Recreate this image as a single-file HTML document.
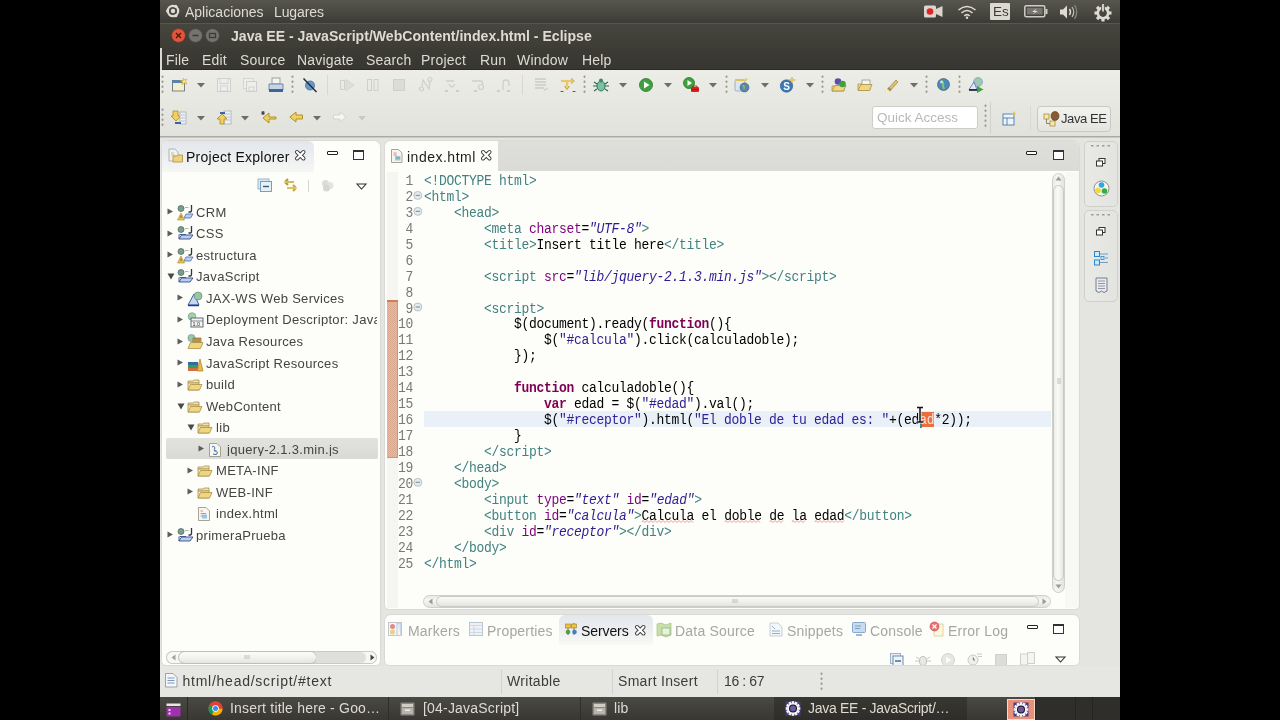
<!DOCTYPE html>
<html><head><meta charset="utf-8"><style>
*{margin:0;padding:0;box-sizing:border-box}
html,body{width:1280px;height:720px;background:#000;overflow:hidden;font-family:"Liberation Sans",sans-serif}
.a{position:absolute}
.t{position:absolute;white-space:pre;line-height:1}
svg{position:absolute;overflow:visible}
#screen{position:absolute;left:160px;top:0;width:960px;height:720px;background:#e6e6e3;overflow:hidden;will-change:transform}
.code{font-family:"Liberation Mono",monospace;font-size:13px;letter-spacing:-0.3px;color:#000}
.cl{position:absolute;left:0;height:16px;line-height:16px;white-space:pre;transform:scaleY(1.12);transform-origin:50% 60%}
.lnn{position:absolute;right:0;height:16px;line-height:16px;color:#787878;text-align:right;transform:scaleY(1.12);transform-origin:50% 60%}
.tg{color:#428282}
.at{color:#7f007f}
.av{color:#2c1c94;font-style:italic}
.kw{color:#7f0055;font-weight:bold}
.st{color:#2e2299}
.sel{color:#fbe0d4}
.sp{}
.tree{font-size:13px;letter-spacing:0.3px;color:#444}
</style></head><body><div id="screen">
<div class="a" style="left:0px;top:0px;width:960px;height:23px;background:linear-gradient(#57564e,#3c3b35)"></div>
<div class="a" style="left:0px;top:23px;width:960px;height:1px;background:#57564f"></div>
<svg style="left:6px;top:4px" width="14" height="14" viewBox="0 0 14 14"><circle cx="7" cy="7" r="5.2" fill="none" stroke="#dfdbd2" stroke-width="2.2"/><circle cx="7" cy="7" r="2.2" fill="#dfdbd2"/><circle cx="1.6" cy="7" r="1.6" fill="#dfdbd2"/><circle cx="9.8" cy="2.3" r="1.6" fill="#dfdbd2"/><circle cx="9.8" cy="11.7" r="1.6" fill="#dfdbd2"/></svg>
<span class="t" style="left:25px;top:5px;font-size:14px;color:#dfdbd2;letter-spacing:0px">Aplicaciones</span>
<span class="t" style="left:114px;top:5px;font-size:14px;color:#dfdbd2;letter-spacing:-0.1px">Lugares</span>
<div class="a" style="left:0px;top:24px;width:960px;height:24px;background:linear-gradient(#46453e,#3d3c35)"></div>
<svg style="left:11px;top:28px" width="15" height="15" viewBox="0 0 15 15"><circle cx="7.5" cy="7.5" r="6.8" fill="#e2553a" stroke="#8a3526" stroke-width="0.6"/><path d="M5 5 L10 10 M10 5 L5 10" stroke="#4a1a10" stroke-width="1.3"/></svg>
<svg style="left:28px;top:28px" width="15" height="15" viewBox="0 0 15 15"><circle cx="7.5" cy="7.5" r="6.8" fill="#75736e" stroke="#4a4945" stroke-width="0.6"/><path d="M4.5 7.5 H10.5" stroke="#3c3b37" stroke-width="1.5"/></svg>
<svg style="left:45px;top:28px" width="15" height="15" viewBox="0 0 15 15"><circle cx="7.5" cy="7.5" r="6.8" fill="#75736e" stroke="#4a4945" stroke-width="0.6"/><rect x="4.5" y="5.5" width="6" height="4" fill="none" stroke="#3c3b37" stroke-width="1.3"/></svg>
<span class="t" style="left:71px;top:29px;font-size:14.1px;font-weight:bold;color:#dfdbd2">Java EE - JavaScript/WebContent/index.html - Eclipse</span>
<div class="a" style="left:0px;top:48px;width:960px;height:22px;background:linear-gradient(#3c3b34,#373630)"></div>
<div class="a" style="left:0px;top:69px;width:960px;height:1px;background:#2a2a25"></div>
<div class="a" style="left:0px;top:48px;width:1.5px;height:22px;background:#d8d8d4"></div>
<span class="t" style="left:6px;top:53px;font-size:14px;color:#dfdbd2;letter-spacing:0.2px">File</span>
<span class="t" style="left:42px;top:53px;font-size:14px;color:#dfdbd2;letter-spacing:0.2px">Edit</span>
<span class="t" style="left:80px;top:53px;font-size:14px;color:#dfdbd2;letter-spacing:0.2px">Source</span>
<span class="t" style="left:137px;top:53px;font-size:14px;color:#dfdbd2;letter-spacing:0.2px">Navigate</span>
<span class="t" style="left:206px;top:53px;font-size:14px;color:#dfdbd2;letter-spacing:0.2px">Search</span>
<span class="t" style="left:261px;top:53px;font-size:14px;color:#dfdbd2;letter-spacing:0.2px">Project</span>
<span class="t" style="left:320px;top:53px;font-size:14px;color:#dfdbd2;letter-spacing:0.2px">Run</span>
<span class="t" style="left:357px;top:53px;font-size:14px;color:#dfdbd2;letter-spacing:0.2px">Window</span>
<span class="t" style="left:422px;top:53px;font-size:14px;color:#dfdbd2;letter-spacing:0.2px">Help</span>
<div class="a" style="left:0px;top:70px;width:960px;height:66px;background:linear-gradient(#edede8,#e2e2dd)"></div>
<div class="a" style="left:0px;top:136px;width:960px;height:1px;background:#a9a9a5"></div>
<div class="a" style="left:0px;top:137px;width:960px;height:1px;background:#c8c8c4"></div>
<div class="a" style="left:0px;top:138px;width:960px;height:528px;background:#e4e4e1"></div>
<div class="a" style="left:224px;top:140px;width:696px;height:470px;background:#fdfdf9;border:1px solid #d9d9d5;border-radius:7px 7px 5px 5px"></div>
<div class="a" style="left:338px;top:141px;width:581px;height:30px;background:linear-gradient(#dedeDB,#dadad7);border-radius:0 6px 0 0"></div>
<div class="a" style="left:225px;top:141px;width:113px;height:31px;background:#fdfdf9;border-radius:6px 7px 0 0"></div>
<span class="t" style="left:247px;top:149.5px;font-size:14px;color:#1e1e1e;letter-spacing:0.5px">index.html</span>
<div class="a" style="left:227px;top:172px;width:11px;height:436px;background:#f5f5f1"></div>
<div class="a" style="left:227px;top:300px;width:11px;height:158px;background:repeating-conic-gradient(#d9a88f 0 25%,#e3bba6 0 50%) 0 0/2px 2px;border:1px solid #d89078;border-top:2px solid #d47a5a;border-left:none"></div>
<div class="a" style="left:264px;top:411px;width:627px;height:16px;background:#eaf0f7"></div>
<div class="a" style="left:761px;top:412px;width:13px;height:15px;background:#ea6e3f"></div>
<div class="a code" style="left:264px;top:174px;width:630px;height:420px;"><div class="cl" style="top:0.00px"><span class="tg">&lt;!DOCTYPE html&gt;</span></div>
<div class="cl" style="top:15.94px"><span class="tg">&lt;html&gt;</span></div>
<div class="cl" style="top:31.88px">    <span class="tg">&lt;head&gt;</span></div>
<div class="cl" style="top:47.82px">        <span class="tg">&lt;meta </span><span class="at">charset</span>=<span class="av">"UTF-8"</span><span class="tg">&gt;</span></div>
<div class="cl" style="top:63.76px">        <span class="tg">&lt;title&gt;</span>Insert title here<span class="tg">&lt;/title&gt;</span></div>
<div class="cl" style="top:79.70px"></div>
<div class="cl" style="top:95.64px">        <span class="tg">&lt;script </span><span class="at">src</span>=<span class="av">"lib/jquery-2.1.3.min.js"</span><span class="tg">&gt;&lt;/script&gt;</span></div>
<div class="cl" style="top:111.58px"></div>
<div class="cl" style="top:127.52px">        <span class="tg">&lt;script&gt;</span></div>
<div class="cl" style="top:143.46px">            $(document).ready(<span class="kw">function</span>(){</div>
<div class="cl" style="top:159.40px">                $(<span class="st">"#calcula"</span>).click(calculadoble);</div>
<div class="cl" style="top:175.34px">            });</div>
<div class="cl" style="top:191.28px"></div>
<div class="cl" style="top:207.22px">            <span class="kw">function</span> calculadoble(){</div>
<div class="cl" style="top:223.16px">                <span class="kw">var</span> edad = $(<span class="st">"#edad"</span>).val();</div>
<div class="cl" style="top:239.10px">                $(<span class="st">"#receptor"</span>).html(<span class="st">"El doble de tu edad es: "</span>+(ed<span class="sel">ad</span>*2));</div>
<div class="cl" style="top:255.04px">            }</div>
<div class="cl" style="top:270.98px">        <span class="tg">&lt;/script&gt;</span></div>
<div class="cl" style="top:286.92px">    <span class="tg">&lt;/head&gt;</span></div>
<div class="cl" style="top:302.86px">    <span class="tg">&lt;body&gt;</span></div>
<div class="cl" style="top:318.80px">        <span class="tg">&lt;input </span><span class="at">type</span>=<span class="av">"text"</span> <span class="at">id</span>=<span class="av">"edad"</span><span class="tg">&gt;</span></div>
<div class="cl" style="top:334.74px">        <span class="tg">&lt;button </span><span class="at">id</span>=<span class="av">"calcula"</span><span class="tg">&gt;</span><span class="sp">Calcula</span> el <span class="sp">doble</span> <span class="sp">de</span> <span class="sp">la</span> <span class="sp">edad</span><span class="tg">&lt;/button&gt;</span></div>
<div class="cl" style="top:350.68px">        <span class="tg">&lt;div </span><span class="at">id</span>=<span class="av">"receptor"</span><span class="tg">&gt;&lt;/div&gt;</span></div>
<div class="cl" style="top:366.62px">    <span class="tg">&lt;/body&gt;</span></div>
<div class="cl" style="top:382.56px"><span class="tg">&lt;/html&gt;</span></div></div>
<svg style="left:482.0px;top:520px" width="53" height="4" viewBox="0 0 53 4"><path d="M0 2 L1 0.5 L3 2.5 L5 0.5 L7 2.5 L9 0.5 L11 2.5 L13 0.5 L15 2.5 L17 0.5 L19 2.5 L21 0.5 L23 2.5 L25 0.5 L27 2.5 L29 0.5 L31 2.5 L33 0.5 L35 2.5 L37 0.5 L39 2.5 L41 0.5 L43 2.5 L45 0.5 L47 2.5 L49 0.5 L51 2.5" fill="none" stroke="#e8908a" stroke-width="0.9"/></svg>
<svg style="left:564.5px;top:520px" width="38" height="4" viewBox="0 0 38 4"><path d="M0 2 L1 0.5 L3 2.5 L5 0.5 L7 2.5 L9 0.5 L11 2.5 L13 0.5 L15 2.5 L17 0.5 L19 2.5 L21 0.5 L23 2.5 L25 0.5 L27 2.5 L29 0.5 L31 2.5 L33 0.5 L35 2.5" fill="none" stroke="#e8908a" stroke-width="0.9"/></svg>
<svg style="left:609.5px;top:520px" width="16" height="4" viewBox="0 0 16 4"><path d="M0 2 L1 0.5 L3 2.5 L5 0.5 L7 2.5 L9 0.5 L11 2.5 L13 0.5" fill="none" stroke="#e8908a" stroke-width="0.9"/></svg>
<svg style="left:632.0px;top:520px" width="16" height="4" viewBox="0 0 16 4"><path d="M0 2 L1 0.5 L3 2.5 L5 0.5 L7 2.5 L9 0.5 L11 2.5 L13 0.5" fill="none" stroke="#e8908a" stroke-width="0.9"/></svg>
<svg style="left:654.5px;top:520px" width="31" height="4" viewBox="0 0 31 4"><path d="M0 2 L1 0.5 L3 2.5 L5 0.5 L7 2.5 L9 0.5 L11 2.5 L13 0.5 L15 2.5 L17 0.5 L19 2.5 L21 0.5 L23 2.5 L25 0.5 L27 2.5 L29 0.5" fill="none" stroke="#e8908a" stroke-width="0.9"/></svg>
<div class="a code" style="left:225px;top:174px;width:28px;height:420px;"><div class="lnn" style="top:0.00px">1</div><div class="lnn" style="top:15.94px">2</div><div class="lnn" style="top:31.88px">3</div><div class="lnn" style="top:47.82px">4</div><div class="lnn" style="top:63.76px">5</div><div class="lnn" style="top:79.70px">6</div><div class="lnn" style="top:95.64px">7</div><div class="lnn" style="top:111.58px">8</div><div class="lnn" style="top:127.52px">9</div><div class="lnn" style="top:143.46px">10</div><div class="lnn" style="top:159.40px">11</div><div class="lnn" style="top:175.34px">12</div><div class="lnn" style="top:191.28px">13</div><div class="lnn" style="top:207.22px">14</div><div class="lnn" style="top:223.16px">15</div><div class="lnn" style="top:239.10px">16</div><div class="lnn" style="top:255.04px">17</div><div class="lnn" style="top:270.98px">18</div><div class="lnn" style="top:286.92px">19</div><div class="lnn" style="top:302.86px">20</div><div class="lnn" style="top:318.80px">21</div><div class="lnn" style="top:334.74px">22</div><div class="lnn" style="top:350.68px">23</div><div class="lnn" style="top:366.62px">24</div><div class="lnn" style="top:382.56px">25</div></div>
<svg style="left:253px;top:190px" width="10" height="10" viewBox="0 0 10 10"><circle cx="4.8" cy="5.439999999999998" r="4" fill="#e4eaee" stroke="#a9b8bf" stroke-width="0.8"/><path d="M2.6 5.439999999999998 H7" stroke="#8c9ca3" stroke-width="1.2"/></svg>
<svg style="left:253px;top:206px" width="10" height="10" viewBox="0 0 10 10"><circle cx="4.8" cy="5.3799999999999955" r="4" fill="#e4eaee" stroke="#a9b8bf" stroke-width="0.8"/><path d="M2.6 5.3799999999999955 H7" stroke="#8c9ca3" stroke-width="1.2"/></svg>
<svg style="left:253px;top:302px" width="10" height="10" viewBox="0 0 10 10"><circle cx="4.8" cy="5.019999999999982" r="4" fill="#e4eaee" stroke="#a9b8bf" stroke-width="0.8"/><path d="M2.6 5.019999999999982 H7" stroke="#8c9ca3" stroke-width="1.2"/></svg>
<svg style="left:253px;top:477px" width="10" height="10" viewBox="0 0 10 10"><circle cx="4.8" cy="5.360000000000014" r="4" fill="#e4eaee" stroke="#a9b8bf" stroke-width="0.8"/><path d="M2.6 5.360000000000014 H7" stroke="#8c9ca3" stroke-width="1.2"/></svg>
<div class="a" style="left:760px;top:420px;width:2px;height:8px;background:#3a8a9a"></div>
<svg style="left:755px;top:406px" width="10" height="18" viewBox="0 0 10 18"><path d="M2 1.5 H8 M5 1.5 V16 M2 16 H8" stroke="#f4f4f4" stroke-width="3"/><path d="M2 1.5 H8 M5 1.5 V16 M2 16 H8" stroke="#151515" stroke-width="1.5"/></svg>
<div class="a" style="left:866px;top:151px;width:11px;height:4px;border:1.2px solid #222;border-radius:1px;background:#fff"></div>
<div class="a" style="left:893px;top:150px;width:11px;height:10px;border:1px solid #333;border-top-width:2px;background:#fff"></div>
<div class="a" style="left:905px;top:172px;width:14px;height:436px;background:#f8f8f5;border-radius:0 0 4px 0"></div>
<div class="a" style="left:892px;top:173px;width:13px;height:420px;background:linear-gradient(90deg,#e9e9e6,#f6f6f3 40%,#e2e2df);border:1px solid #cfcfcc;border-radius:7px"></div>
<div class="a" style="left:893px;top:185px;width:11px;height:396px;background:linear-gradient(90deg,#ededea,#fafaf7 45%,#e6e6e3);border:1px solid #c8c8c5;border-radius:6px"></div>
<svg style="left:895px;top:176px" width="7" height="5" viewBox="0 0 7 5"><path d="M0.5 4.5 L3.5 0.5 L6.5 4.5Z" fill="#9a9a97"/></svg>
<svg style="left:895px;top:584px" width="7" height="5" viewBox="0 0 7 5"><path d="M0.5 0.5 L3.5 4.5 L6.5 0.5Z" fill="#9a9a97"/></svg>
<svg style="left:897px;top:378px" width="4" height="7" viewBox="0 0 4 7"><path d="M0 1 H4 M0 3 H4 M0 5 H4" stroke="#b0b0ad" stroke-width="0.8"/></svg>
<div class="a" style="left:263px;top:595px;width:628px;height:13px;background:linear-gradient(#e9e9e6,#f6f6f3 40%,#e2e2df);border:1px solid #cfcfcc;border-radius:7px"></div>
<div class="a" style="left:276px;top:596px;width:603px;height:11px;background:linear-gradient(#fafaf7,#f0f0ed 50%,#e3e3e0);border:1px solid #c8c8c5;border-radius:6px"></div>
<svg style="left:268px;top:598px" width="5" height="7" viewBox="0 0 5 7"><path d="M4.5 0.5 L0.5 3.5 L4.5 6.5Z" fill="#9a9a97"/></svg>
<svg style="left:882px;top:598px" width="5" height="7" viewBox="0 0 5 7"><path d="M0.5 0.5 L4.5 3.5 L0.5 6.5Z" fill="#9a9a97"/></svg>
<svg style="left:572px;top:599px" width="7" height="4" viewBox="0 0 7 4"><path d="M1 0 V4 M3 0 V4 M5 0 V4" stroke="#b0b0ad" stroke-width="0.8"/></svg>
<div class="a" style="left:1px;top:140px;width:220px;height:526px;background:#fdfdf9;border:1px solid #d9d9d5;border-radius:7px 7px 5px 5px"></div>
<div class="a" style="left:2px;top:141px;width:152px;height:31px;background:linear-gradient(#e3e7ec,#eef0f1 60%,#f6f7f5);border-radius:6px 6px 0 0"></div>
<svg style="left:8px;top:148px" width="16" height="15" viewBox="0 0 16 15"><path d="M1 1 H7 L10 4 V13 H1Z" fill="#f2f2ee" stroke="#a6a49c" stroke-width="0.8"/><path d="M3 5 H6 M3 7 H7" stroke="#b0b0b0" stroke-width="0.8"/><path d="M5 8 H9 L10 7 H14.5 V14 H5Z" fill="#f0d27a" stroke="#b4964a" stroke-width="0.9"/></svg>
<span class="t" style="left:26px;top:149.5px;font-size:14px;color:#111;letter-spacing:0.25px">Project Explorer</span>
<svg style="left:135px;top:150px" width="11" height="11" viewBox="0 0 11 11"><path d="M2 2 L8.5 8.5 M8.5 2 L2 8.5" stroke="#3a3a3a" stroke-width="4" stroke-linecap="round"/><path d="M2 2 L8.5 8.5 M8.5 2 L2 8.5" stroke="#fff" stroke-width="2.2" stroke-linecap="round"/></svg>
<div class="a" style="left:167px;top:151px;width:11px;height:4px;border:1.2px solid #222;border-radius:1px;background:#fff"></div>
<div class="a" style="left:193px;top:150px;width:11px;height:10px;border:1px solid #333;border-top-width:2px;background:#fff"></div>
<svg style="left:97px;top:178px" width="16" height="15" viewBox="0 0 16 15"><rect x="1" y="1" width="11" height="10" fill="#dfe9f1" stroke="#8fb0c8" stroke-width="0.9"/><rect x="3.5" y="3.5" width="11" height="10" fill="#e9f0f5" stroke="#6f95b3" stroke-width="0.9"/><path d="M6 8.5 H12" stroke="#2b5f8a" stroke-width="1.4"/></svg>
<svg style="left:122px;top:177px" width="17" height="16" viewBox="0 0 17 16"><path d="M3 5 H12 M3 5 L6 2 M3 5 L6 8" stroke="#b89a3a" stroke-width="2.2" fill="none"/><path d="M14 11 H5 M14 11 L11 8 M14 11 L11 14" stroke="#c9a640" stroke-width="2.2" fill="none"/><path d="M3 5 H12 M14 11 H5" stroke="#f4dc78" stroke-width="1"/></svg>
<div class="a" style="left:148px;top:180px;width:1px;height:12px;background:#d5d5d2"></div>
<svg style="left:161px;top:179px" width="14" height="13" viewBox="0 0 14 13"><circle cx="4.5" cy="4.5" r="3.5" fill="#dcdcda"/><circle cx="9" cy="6.5" r="3.5" fill="#e3e3e1"/><circle cx="5.5" cy="9" r="3.5" fill="#d6d6d4"/></svg>
<svg style="left:196px;top:183px" width="11" height="7" viewBox="0 0 11 7"><path d="M1 1 H10 L5.5 6Z" fill="#fff" stroke="#333" stroke-width="1.1"/></svg>
<div class="a" style="left:6px;top:438px;width:212px;height:21px;background:linear-gradient(#e2e2df,#d9d9d6);border-radius:2px"></div>
<svg style="left:7px;top:208px" width="7" height="8" viewBox="0 0 7 8"><path d="M0.5 0.5 V6.5 L6 3.5Z" fill="#5c5c5c"/></svg>
<svg style="left:17px;top:205px" width="17" height="17" viewBox="0 0 17 17"><path d="M7 13 L9 9 H16 L13.5 13Z" fill="#b8d0f0" stroke="#4a6aaa" stroke-width="0.8"/><circle cx="4" cy="3.5" r="3" fill="#7aa088" stroke="#46606a" stroke-width="0.7"/><path d="M8 2.5 H11.5" stroke="#bfb49a" stroke-width="1"/><path d="M14.5 0 V5.5 Q14.5 7 12.5 7 H11.5" stroke="#283848" stroke-width="1.3" fill="none"/><path d="M4 8 L7.5 15 H0.5Z" fill="#e6c052" stroke="#b08a30" stroke-width="0.6"/><path d="M4 10.5 V13" stroke="#7a5a10" stroke-width="0.9"/></svg>
<span class="t tree" style="left:36px;top:205.70px;width:181px;overflow:hidden">CRM</span>
<svg style="left:7px;top:230px" width="7" height="8" viewBox="0 0 7 8"><path d="M0.5 0.5 V6.5 L6 3.5Z" fill="#5c5c5c"/></svg>
<svg style="left:17px;top:226px" width="17" height="17" viewBox="0 0 17 17"><path d="M2.5 8.5 H9 M2 13 L4.5 9 H16 L13 13Z" fill="#b8d0f0" stroke="#3a4a8a" stroke-width="0.9"/><path d="M2 8.5 V13" stroke="#3a4a8a" stroke-width="0.9"/><circle cx="4" cy="3.5" r="3" fill="#7aa088" stroke="#46606a" stroke-width="0.7"/><path d="M8 2.5 H11.5" stroke="#bfb49a" stroke-width="1"/><path d="M14.5 0 V5.5 Q14.5 7 12.5 7 H11.5" stroke="#283848" stroke-width="1.3" fill="none"/></svg>
<span class="t tree" style="left:36px;top:227.25px;width:181px;overflow:hidden">CSS</span>
<svg style="left:7px;top:251px" width="7" height="8" viewBox="0 0 7 8"><path d="M0.5 0.5 V6.5 L6 3.5Z" fill="#5c5c5c"/></svg>
<svg style="left:17px;top:248px" width="17" height="17" viewBox="0 0 17 17"><path d="M7 13 L9 9 H16 L13.5 13Z" fill="#b8d0f0" stroke="#4a6aaa" stroke-width="0.8"/><circle cx="4" cy="3.5" r="3" fill="#7aa088" stroke="#46606a" stroke-width="0.7"/><path d="M8 2.5 H11.5" stroke="#bfb49a" stroke-width="1"/><path d="M14.5 0 V5.5 Q14.5 7 12.5 7 H11.5" stroke="#283848" stroke-width="1.3" fill="none"/><path d="M4 8 L7.5 15 H0.5Z" fill="#e6c052" stroke="#b08a30" stroke-width="0.6"/><path d="M4 10.5 V13" stroke="#7a5a10" stroke-width="0.9"/></svg>
<span class="t tree" style="left:36px;top:248.80px;width:181px;overflow:hidden">estructura</span>
<svg style="left:6.5px;top:273px" width="8" height="7" viewBox="0 0 8 7"><path d="M0.5 0.5 H7.5 L4 6.5Z" fill="#4a4a4a"/></svg>
<svg style="left:17px;top:269px" width="17" height="17" viewBox="0 0 17 17"><path d="M2.5 8.5 H9 M2 13 L4.5 9 H16 L13 13Z" fill="#b8d0f0" stroke="#3a4a8a" stroke-width="0.9"/><path d="M2 8.5 V13" stroke="#3a4a8a" stroke-width="0.9"/><circle cx="4" cy="3.5" r="3" fill="#7aa088" stroke="#46606a" stroke-width="0.7"/><path d="M8 2.5 H11.5" stroke="#bfb49a" stroke-width="1"/><path d="M14.5 0 V5.5 Q14.5 7 12.5 7 H11.5" stroke="#283848" stroke-width="1.3" fill="none"/></svg>
<span class="t tree" style="left:36px;top:270.35px;width:181px;overflow:hidden">JavaScript</span>
<svg style="left:17px;top:294px" width="7" height="8" viewBox="0 0 7 8"><path d="M0.5 0.5 V6.5 L6 3.5Z" fill="#5c5c5c"/></svg>
<svg style="left:27px;top:291px" width="17" height="16" viewBox="0 0 17 16"><path d="M1 14 L7 3 L12 14Z" fill="#c8d8ee" stroke="#3d5fa8" stroke-width="1"/><path d="M1 14.5 H12" stroke="#1e3c8c" stroke-width="1.5"/><circle cx="11" cy="5" r="4" fill="#9cc69a" stroke="#5b8aa0" stroke-width="0.7"/></svg>
<span class="t tree" style="left:46px;top:291.90px;width:171px;overflow:hidden">JAX-WS Web Services</span>
<svg style="left:17px;top:316px" width="7" height="8" viewBox="0 0 7 8"><path d="M0.5 0.5 V6.5 L6 3.5Z" fill="#5c5c5c"/></svg>
<svg style="left:27px;top:312px" width="17" height="16" viewBox="0 0 17 16"><circle cx="5" cy="4.5" r="3.8" fill="#a9cfa5" stroke="#6a9ab0" stroke-width="0.7"/><rect x="4" y="6" width="12" height="9" fill="#f4f4f0" stroke="#50606e" stroke-width="0.9"/><path d="M4 9 H16" stroke="#50606e" stroke-width="0.7"/><text x="5.5" y="14" font-size="5.5" font-family="Liberation Sans" fill="#333">1.0</text></svg>
<span class="t tree" style="left:46px;top:313.45px;width:171px;overflow:hidden">Deployment Descriptor: JavaScript</span>
<svg style="left:17px;top:338px" width="7" height="8" viewBox="0 0 7 8"><path d="M0.5 0.5 V6.5 L6 3.5Z" fill="#5c5c5c"/></svg>
<svg style="left:27px;top:334px" width="17" height="16" viewBox="0 0 17 16"><circle cx="4.5" cy="4" r="3.6" fill="#9cc59a" stroke="#6a9ab0" stroke-width="0.7"/><path d="M6 4 H14 V9 H6Z" fill="#c9a35a" stroke="#8a6a2a" stroke-width="0.7"/><path d="M8 4 V9 M10 4 V9 M12 4 V9" stroke="#8a6a2a" stroke-width="0.6"/><path d="M1 14.5 L3.5 8.5 H16 L13.5 14.5Z" fill="#f1d67e" stroke="#a8904e" stroke-width="0.8"/></svg>
<span class="t tree" style="left:46px;top:335.00px;width:171px;overflow:hidden">Java Resources</span>
<svg style="left:17px;top:359px" width="7" height="8" viewBox="0 0 7 8"><path d="M0.5 0.5 V6.5 L6 3.5Z" fill="#5c5c5c"/></svg>
<svg style="left:27px;top:356px" width="17" height="16" viewBox="0 0 17 16"><rect x="1" y="6" width="10" height="3" fill="#2f6f9f"/><rect x="1" y="9" width="10" height="3" fill="#3e9a5a"/><rect x="1" y="12" width="10" height="3" fill="#d07040"/><path d="M10 15 L13 3 L16 15Z" fill="#e8b84a" stroke="#a8802a" stroke-width="0.7"/></svg>
<span class="t tree" style="left:46px;top:356.55px;width:171px;overflow:hidden">JavaScript Resources</span>
<svg style="left:17px;top:381px" width="7" height="8" viewBox="0 0 7 8"><path d="M0.5 0.5 V6.5 L6 3.5Z" fill="#5c5c5c"/></svg>
<svg style="left:27px;top:378px" width="16" height="14" viewBox="0 0 16 14"><path d="M1 3 H6 L7 2 H12 V5 H1Z" fill="#f5e3a8" stroke="#a8904e" stroke-width="0.8"/><path d="M1 5 H12 V12 H1Z" fill="#f7e8b4" stroke="#a8904e" stroke-width="0.8"/><path d="M1 12 L3.5 6.5 H15 L12.5 12Z" fill="#f1d67e" stroke="#a8904e" stroke-width="0.8"/></svg>
<span class="t tree" style="left:46px;top:378.10px;width:171px;overflow:hidden">build</span>
<svg style="left:16.5px;top:403px" width="8" height="7" viewBox="0 0 8 7"><path d="M0.5 0.5 H7.5 L4 6.5Z" fill="#4a4a4a"/></svg>
<svg style="left:27px;top:400px" width="16" height="14" viewBox="0 0 16 14"><path d="M1 3 H6 L7 2 H12 V5 H1Z" fill="#f5e3a8" stroke="#a8904e" stroke-width="0.8"/><path d="M1 5 H12 V12 H1Z" fill="#f7e8b4" stroke="#a8904e" stroke-width="0.8"/><path d="M1 12 L3.5 6.5 H15 L12.5 12Z" fill="#f1d67e" stroke="#a8904e" stroke-width="0.8"/></svg>
<span class="t tree" style="left:46px;top:399.65px;width:171px;overflow:hidden">WebContent</span>
<svg style="left:26.5px;top:424px" width="8" height="7" viewBox="0 0 8 7"><path d="M0.5 0.5 H7.5 L4 6.5Z" fill="#4a4a4a"/></svg>
<svg style="left:37px;top:421px" width="16" height="14" viewBox="0 0 16 14"><path d="M1 3 H6 L7 2 H12 V5 H1Z" fill="#f5e3a8" stroke="#a8904e" stroke-width="0.8"/><path d="M1 5 H12 V12 H1Z" fill="#f7e8b4" stroke="#a8904e" stroke-width="0.8"/><path d="M1 12 L3.5 6.5 H15 L12.5 12Z" fill="#f1d67e" stroke="#a8904e" stroke-width="0.8"/></svg>
<span class="t tree" style="left:56px;top:421.20px;width:161px;overflow:hidden">lib</span>
<svg style="left:38px;top:445px" width="7" height="8" viewBox="0 0 7 8"><path d="M0.5 0.5 V6.5 L6 3.5Z" fill="#5c5c5c"/></svg>
<svg style="left:48px;top:442px" width="14" height="16" viewBox="0 0 14 16"><path d="M1.5 1.5 H9 L12.5 5 V14.5 H1.5Z" fill="#f7f7f0" stroke="#9c9a88" stroke-width="0.9"/><path d="M4 5 Q6 3 7 6 Q5 9 8 9 M6 9 Q10 8 9 12 Q7 13 5 12" stroke="#3a6fb0" stroke-width="1" fill="none"/></svg>
<span class="t tree" style="left:67px;top:442.75px;width:150px;overflow:hidden">jquery-2.1.3.min.js</span>
<svg style="left:27px;top:467px" width="7" height="8" viewBox="0 0 7 8"><path d="M0.5 0.5 V6.5 L6 3.5Z" fill="#5c5c5c"/></svg>
<svg style="left:37px;top:464px" width="16" height="14" viewBox="0 0 16 14"><path d="M1 3 H6 L7 2 H12 V5 H1Z" fill="#f5e3a8" stroke="#a8904e" stroke-width="0.8"/><path d="M1 5 H12 V12 H1Z" fill="#f7e8b4" stroke="#a8904e" stroke-width="0.8"/><path d="M1 12 L3.5 6.5 H15 L12.5 12Z" fill="#f1d67e" stroke="#a8904e" stroke-width="0.8"/></svg>
<span class="t tree" style="left:56px;top:464.30px;width:161px;overflow:hidden">META-INF</span>
<svg style="left:27px;top:488px" width="7" height="8" viewBox="0 0 7 8"><path d="M0.5 0.5 V6.5 L6 3.5Z" fill="#5c5c5c"/></svg>
<svg style="left:37px;top:486px" width="16" height="14" viewBox="0 0 16 14"><path d="M1 3 H6 L7 2 H12 V5 H1Z" fill="#f5e3a8" stroke="#a8904e" stroke-width="0.8"/><path d="M1 5 H12 V12 H1Z" fill="#f7e8b4" stroke="#a8904e" stroke-width="0.8"/><path d="M1 12 L3.5 6.5 H15 L12.5 12Z" fill="#f1d67e" stroke="#a8904e" stroke-width="0.8"/></svg>
<span class="t tree" style="left:56px;top:485.85px;width:161px;overflow:hidden">WEB-INF</span>
<svg style="left:37px;top:506px" width="14" height="16" viewBox="0 0 14 16"><path d="M1.5 1.5 H9 L12.5 5 V14.5 H1.5Z" fill="#f7f7f0" stroke="#9c9a88" stroke-width="0.9"/><path d="M3.5 5 H6 M3.5 7.5 H9 M3.5 10 H9" stroke="#d08080" stroke-width="0.9"/><rect x="5" y="8.5" width="5" height="4" fill="#9fc2e0"/></svg>
<span class="t tree" style="left:56px;top:507.40px;width:161px;overflow:hidden">index.html</span>
<svg style="left:7px;top:531px" width="7" height="8" viewBox="0 0 7 8"><path d="M0.5 0.5 V6.5 L6 3.5Z" fill="#5c5c5c"/></svg>
<svg style="left:17px;top:528px" width="17" height="17" viewBox="0 0 17 17"><path d="M2.5 8.5 H9 M2 13 L4.5 9 H16 L13 13Z" fill="#b8d0f0" stroke="#3a4a8a" stroke-width="0.9"/><path d="M2 8.5 V13" stroke="#3a4a8a" stroke-width="0.9"/><circle cx="4" cy="3.5" r="3" fill="#7aa088" stroke="#46606a" stroke-width="0.7"/><path d="M8 2.5 H11.5" stroke="#bfb49a" stroke-width="1"/><path d="M14.5 0 V5.5 Q14.5 7 12.5 7 H11.5" stroke="#283848" stroke-width="1.3" fill="none"/></svg>
<span class="t tree" style="left:36px;top:528.95px;width:181px;overflow:hidden">primeraPrueba</span>
<svg style="left:1px;top:75px" width="3" height="22" viewBox="0 0 3 22"><rect x="0.5" y="0.5" width="2" height="2.4" rx="0.8" fill="#9c9b97"/><rect x="0.5" y="5.5" width="2" height="2.4" rx="0.8" fill="#9c9b97"/><rect x="0.5" y="10.5" width="2" height="2.4" rx="0.8" fill="#9c9b97"/><rect x="0.5" y="15.5" width="2" height="2.4" rx="0.8" fill="#9c9b97"/></svg>
<svg style="left:1px;top:108px" width="3" height="22" viewBox="0 0 3 22"><rect x="0.5" y="0.5" width="2" height="2.4" rx="0.8" fill="#9c9b97"/><rect x="0.5" y="5.5" width="2" height="2.4" rx="0.8" fill="#9c9b97"/><rect x="0.5" y="10.5" width="2" height="2.4" rx="0.8" fill="#9c9b97"/><rect x="0.5" y="15.5" width="2" height="2.4" rx="0.8" fill="#9c9b97"/></svg>
<svg style="left:12px;top:78px" width="15" height="14" viewBox="0 0 15 14"><rect x="0.5" y="2.5" width="12" height="10.5" fill="#f6f0c8" stroke="#6a7480" stroke-width="0.9"/><rect x="0.5" y="2.5" width="12" height="2.5" fill="#4a86c0"/><path d="M11 0 L13 2 L15 1 L13.5 3.5 L15 6 L12 5 L10 7 L10.5 4 L8 2.5 L11 2.5Z" fill="#f8e080" stroke="#c09a30" stroke-width="0.5"/></svg>
<svg style="left:37px;top:83px" width="8" height="5" viewBox="0 0 8 5"><path d="M0 0 H8 L4 4.5Z" fill="#6e6d6a"/></svg>
<svg style="left:57px;top:78px" width="14" height="14" viewBox="0 0 14 14"><rect x="0.5" y="0.5" width="13" height="13" fill="#eeeeec" stroke="#cfcfcc" stroke-width="1"/><rect x="3" y="0.5" width="8" height="5" fill="none" stroke="#d2d2cf"/><rect x="3.5" y="8" width="7" height="5" fill="none" stroke="#d2d2cf"/></svg>
<svg style="left:83px;top:78px" width="14" height="14" viewBox="0 0 14 14"><rect x="0.5" y="0.5" width="10" height="10" fill="#eeeeec" stroke="#d5d5d2"/><rect x="3.5" y="3.5" width="10" height="10" fill="#eeeeec" stroke="#cfcfcc"/><rect x="6" y="9" width="5" height="4" fill="none" stroke="#d2d2cf"/></svg>
<svg style="left:108px;top:77px" width="16" height="16" viewBox="0 0 16 16"><rect x="4" y="1" width="8" height="6" fill="#f4f4f4" stroke="#8a8a8a" stroke-width="0.8"/><path d="M1 7 H15 V13 H1Z" fill="#c8d4e0" stroke="#6080a8" stroke-width="0.9"/><rect x="1" y="12" width="14" height="3" fill="#3c64a0"/></svg>
<svg style="left:131px;top:75px" width="3" height="22" viewBox="0 0 3 22"><rect x="0.5" y="0.5" width="2" height="2.4" rx="0.8" fill="#9c9b97"/><rect x="0.5" y="5.5" width="2" height="2.4" rx="0.8" fill="#9c9b97"/><rect x="0.5" y="10.5" width="2" height="2.4" rx="0.8" fill="#9c9b97"/><rect x="0.5" y="15.5" width="2" height="2.4" rx="0.8" fill="#9c9b97"/></svg>
<svg style="left:142px;top:77px" width="16" height="16" viewBox="0 0 16 16"><circle cx="8" cy="8.5" r="4.5" fill="#6a9ac8" stroke="#3e6a98" stroke-width="0.8"/><path d="M1.5 1.5 L14.5 15" stroke="#1a3048" stroke-width="1.5"/></svg>
<div class="a" style="left:167px;top:75px;width:1px;height:20px;background:#d8d7d3"></div>
<svg style="left:180px;top:78px" width="15" height="14" viewBox="0 0 15 14"><rect x="0.5" y="2.5" width="4" height="9" fill="none" stroke="#cfcfcc"/><path d="M6 1.5 L14 7 L6 12.5Z" fill="#dededb" stroke="#cfcfcc" stroke-width="0.8"/></svg>
<svg style="left:207px;top:78px" width="12" height="14" viewBox="0 0 12 14"><rect x="0.5" y="1.5" width="4" height="11" fill="none" stroke="#cfcfcc"/><rect x="7" y="1.5" width="4" height="11" fill="none" stroke="#cfcfcc"/></svg>
<svg style="left:233px;top:78px" width="13" height="14" viewBox="0 0 13 14"><rect x="0.5" y="1.5" width="11" height="11" fill="#dcdcd9" stroke="#cfcfcc"/></svg>
<svg style="left:259px;top:77px" width="14" height="15" viewBox="0 0 14 15"><circle cx="2.5" cy="12" r="2" fill="none" stroke="#cfcfcc" stroke-width="1.2"/><circle cx="11" cy="2.5" r="2" fill="none" stroke="#cfcfcc" stroke-width="1.2"/><path d="M3 10 L4 3 L10 12 L11 4.5" fill="none" stroke="#cfcfcc" stroke-width="1.2"/></svg>
<svg style="left:284px;top:78px" width="16" height="14" viewBox="0 0 16 14"><path d="M2 3 H10" stroke="#cfcfcc" stroke-width="1.5"/><path d="M5 6 Q8 12 11 6" fill="none" stroke="#cfcfcc" stroke-width="1.5"/><path d="M1 13 H4 M12 13 H15" stroke="#c4c4c1" stroke-width="1.5"/></svg>
<svg style="left:310px;top:78px" width="16" height="14" viewBox="0 0 16 14"><path d="M2 3 H10 Q14 3 12 7" fill="none" stroke="#cfcfcc" stroke-width="1.5"/><circle cx="11" cy="9" r="2.5" fill="none" stroke="#cfcfcc" stroke-width="1.2"/><path d="M4 13 H7" stroke="#c4c4c1" stroke-width="1.5"/></svg>
<svg style="left:336px;top:78px" width="16" height="14" viewBox="0 0 16 14"><path d="M7 12 V5 Q7 2 10 2 Q13 2 13 5 V8" fill="none" stroke="#cfcfcc" stroke-width="1.4"/><path d="M1 13 H4 M11 13 H14" stroke="#c4c4c1" stroke-width="1.5"/></svg>
<div class="a" style="left:362px;top:75px;width:1px;height:20px;background:#d8d7d3"></div>
<svg style="left:375px;top:77px" width="15" height="16" viewBox="0 0 15 16"><path d="M0 2 H11 M0 5 H11 M0 8 H11 M0 11 H7" stroke="#cacac7" stroke-width="1.6"/><path d="M7 10 L10 13 L13 11" fill="none" stroke="#d0d0cd" stroke-width="1.4"/></svg>
<svg style="left:400px;top:77px" width="16" height="16" viewBox="0 0 16 16"><path d="M1 4 H12" stroke="#e9c868" stroke-width="2.2"/><path d="M11 1.5 L14 4 L11 6.5" fill="none" stroke="#d8b040" stroke-width="1.2"/><path d="M7 5 V11" stroke="#e9c868" stroke-width="2.4"/><path d="M4.5 9 L7 12.5 L9.5 9" fill="#f0d070" stroke="#b89030" stroke-width="0.8"/><path d="M0 15 Q2 13 4 15Z M12 15 Q14 13 16 15Z" fill="#2e4a70"/></svg>
<svg style="left:423px;top:75px" width="3" height="22" viewBox="0 0 3 22"><rect x="0.5" y="0.5" width="2" height="2.4" rx="0.8" fill="#9c9b97"/><rect x="0.5" y="5.5" width="2" height="2.4" rx="0.8" fill="#9c9b97"/><rect x="0.5" y="10.5" width="2" height="2.4" rx="0.8" fill="#9c9b97"/><rect x="0.5" y="15.5" width="2" height="2.4" rx="0.8" fill="#9c9b97"/></svg>
<svg style="left:433px;top:77px" width="16" height="16" viewBox="0 0 16 16"><ellipse cx="8" cy="9" rx="4" ry="5" fill="#7cc0a0" stroke="#2e7a58" stroke-width="1"/><circle cx="8" cy="3.5" r="2" fill="#3e8a68"/><path d="M1 5 L4 7 M15 5 L12 7 M0 9 H4 M16 9 H12 M1 14 L4 12 M15 14 L12 12" stroke="#2e6a50" stroke-width="1.2"/></svg>
<svg style="left:459px;top:83px" width="8" height="5" viewBox="0 0 8 5"><path d="M0 0 H8 L4 4.5Z" fill="#6e6d6a"/></svg>
<svg style="left:479px;top:78px" width="14" height="14" viewBox="0 0 14 14"><circle cx="7" cy="7" r="6.5" fill="#3ea03e" stroke="#2a7a2a" stroke-width="0.8"/><path d="M5 3.5 L10.5 7 L5 10.5Z" fill="#fff"/></svg>
<svg style="left:504px;top:83px" width="8" height="5" viewBox="0 0 8 5"><path d="M0 0 H8 L4 4.5Z" fill="#6e6d6a"/></svg>
<svg style="left:523px;top:77px" width="16" height="16" viewBox="0 0 16 16"><circle cx="6" cy="6" r="5.5" fill="#3ea03e" stroke="#2a7a2a" stroke-width="0.8"/><path d="M4.5 3 L9 6 L4.5 9Z" fill="#fff"/><rect x="8" y="10" width="8" height="5" rx="1" fill="#d82020"/><path d="M10 10 V9 H14 V10 M8 12.5 H16" stroke="#a01010" stroke-width="0.8" fill="none"/></svg>
<svg style="left:549px;top:83px" width="8" height="5" viewBox="0 0 8 5"><path d="M0 0 H8 L4 4.5Z" fill="#6e6d6a"/></svg>
<svg style="left:565px;top:75px" width="3" height="22" viewBox="0 0 3 22"><rect x="0.5" y="0.5" width="2" height="2.4" rx="0.8" fill="#9c9b97"/><rect x="0.5" y="5.5" width="2" height="2.4" rx="0.8" fill="#9c9b97"/><rect x="0.5" y="10.5" width="2" height="2.4" rx="0.8" fill="#9c9b97"/><rect x="0.5" y="15.5" width="2" height="2.4" rx="0.8" fill="#9c9b97"/></svg>
<svg style="left:574px;top:77px" width="16" height="16" viewBox="0 0 16 16"><rect x="1" y="3" width="10" height="11" rx="1.5" fill="#dbe6f0" stroke="#8aa2b8" stroke-width="0.8"/><path d="M1 3 H12" stroke="#e0c060" stroke-width="2"/><circle cx="10.5" cy="10.5" r="4.5" fill="#5a86b0" stroke="#3a5a80" stroke-width="0.6"/><path d="M8.5 8.5 Q11 9 10 12" stroke="#8ac060" stroke-width="1.4" fill="none"/><path d="M12 0 L13 2 L15 2.5 L13 3 L12 5 L11 3 L9 2.5 L11 2Z" fill="#f0d060"/></svg>
<svg style="left:601px;top:83px" width="8" height="5" viewBox="0 0 8 5"><path d="M0 0 H8 L4 4.5Z" fill="#6e6d6a"/></svg>
<svg style="left:620px;top:77px" width="16" height="16" viewBox="0 0 16 16"><circle cx="6.5" cy="9" r="6.2" fill="#3a78b8" stroke="#2a5a90" stroke-width="0.6"/><text x="3.3" y="13" font-size="10" font-weight="bold" font-family="Liberation Sans" fill="#fff">S</text><path d="M12 0 L13 2.5 L15.5 3 L13 3.5 L12 6 L11 3.5 L8.5 3 L11 2.5Z" fill="#f0d060" stroke="#c0a030" stroke-width="0.4"/></svg>
<svg style="left:646px;top:83px" width="8" height="5" viewBox="0 0 8 5"><path d="M0 0 H8 L4 4.5Z" fill="#6e6d6a"/></svg>
<svg style="left:661px;top:75px" width="3" height="22" viewBox="0 0 3 22"><rect x="0.5" y="0.5" width="2" height="2.4" rx="0.8" fill="#9c9b97"/><rect x="0.5" y="5.5" width="2" height="2.4" rx="0.8" fill="#9c9b97"/><rect x="0.5" y="10.5" width="2" height="2.4" rx="0.8" fill="#9c9b97"/><rect x="0.5" y="15.5" width="2" height="2.4" rx="0.8" fill="#9c9b97"/></svg>
<svg style="left:671px;top:77px" width="16" height="16" viewBox="0 0 16 16"><path d="M1 9 H13 V14 H1Z" fill="#f3dc8a" stroke="#a8904e" stroke-width="0.8"/><path d="M1 14 L4 8.5 H15 L12.5 14Z" fill="#f1d67e" stroke="#a8904e" stroke-width="0.8"/><circle cx="7" cy="4.5" r="3.3" fill="#5a50a8"/><circle cx="11.5" cy="7" r="3.3" fill="#3ea040"/></svg>
<svg style="left:697px;top:78px" width="16" height="14" viewBox="0 0 16 14"><path d="M1 6 H13 V12 H1Z" fill="#f3dc8a" stroke="#a8904e" stroke-width="0.8"/><rect x="5" y="2" width="8" height="5" fill="#f4f4f0" stroke="#8a8a88" stroke-width="0.7"/><path d="M1 12.5 L4 6.5 H15 L12.5 12.5Z" fill="#f1d67e" stroke="#a8904e" stroke-width="0.8"/></svg>
<svg style="left:724px;top:77px" width="16" height="16" viewBox="0 0 16 16"><path d="M2 14 L1 15 M3 13 L12 3 L14 5 L5 15Z" fill="#e0c070" stroke="#a88a40" stroke-width="0.8"/><path d="M2.5 11.5 L6.5 15.5 L1 15.5Z" fill="#f8f0c0"/><path d="M4 11 L7 13" stroke="#8a8a80" stroke-width="2"/></svg>
<svg style="left:750px;top:83px" width="8" height="5" viewBox="0 0 8 5"><path d="M0 0 H8 L4 4.5Z" fill="#6e6d6a"/></svg>
<svg style="left:765px;top:75px" width="3" height="22" viewBox="0 0 3 22"><rect x="0.5" y="0.5" width="2" height="2.4" rx="0.8" fill="#9c9b97"/><rect x="0.5" y="5.5" width="2" height="2.4" rx="0.8" fill="#9c9b97"/><rect x="0.5" y="10.5" width="2" height="2.4" rx="0.8" fill="#9c9b97"/><rect x="0.5" y="15.5" width="2" height="2.4" rx="0.8" fill="#9c9b97"/></svg>
<svg style="left:777px;top:78px" width="13" height="13" viewBox="0 0 13 13"><circle cx="6.5" cy="6.5" r="6" fill="#4a8ab8" stroke="#3a6080" stroke-width="0.7"/><path d="M4 3 Q7 4 6 8 L7 11" stroke="#90c060" stroke-width="2" fill="none"/><circle cx="4.5" cy="4" r="1.5" fill="#e8f0f8" opacity="0.7"/></svg>
<svg style="left:798px;top:75px" width="3" height="22" viewBox="0 0 3 22"><rect x="0.5" y="0.5" width="2" height="2.4" rx="0.8" fill="#9c9b97"/><rect x="0.5" y="5.5" width="2" height="2.4" rx="0.8" fill="#9c9b97"/><rect x="0.5" y="10.5" width="2" height="2.4" rx="0.8" fill="#9c9b97"/><rect x="0.5" y="15.5" width="2" height="2.4" rx="0.8" fill="#9c9b97"/></svg>
<svg style="left:808px;top:77px" width="16" height="16" viewBox="0 0 16 16"><circle cx="10" cy="5" r="4.5" fill="#9cc8b8" stroke="#6a9ab0" stroke-width="0.6"/><path d="M1 12.5 L6 5 L9 12.5Z" fill="#dfe8f4" stroke="#5070a8" stroke-width="0.8"/><path d="M1 13 H9" stroke="#101830" stroke-width="1.6"/><path d="M9 9 L15.5 12.5 L9 16Z" fill="#3ea040"/></svg>
<svg style="left:11px;top:110px" width="16" height="15" viewBox="0 0 16 15"><path d="M1 1 H6 V6 H9 L4 11 L-1 6 H1Z" transform="translate(1,0)" fill="#f1d060" stroke="#b08a20" stroke-width="0.8"/><rect x="9" y="2" width="6" height="12" fill="#f0f2f6" stroke="#9aa4b0" stroke-width="0.7"/><path d="M10 5 H14 M10 8 H14 M10 11 H14" stroke="#9ab" stroke-width="0.7"/><rect x="4" y="12" width="6" height="2" fill="#3a64a8"/></svg>
<svg style="left:37px;top:116px" width="8" height="5" viewBox="0 0 8 5"><path d="M0 0 H8 L4 4.5Z" fill="#6e6d6a"/></svg>
<svg style="left:56px;top:110px" width="16" height="15" viewBox="0 0 16 15"><rect x="8" y="1" width="7" height="13" fill="#f0f2f6" stroke="#9aa4b0" stroke-width="0.7"/><path d="M9 4 H14 M9 7 H14 M9 10 H14" stroke="#9ab" stroke-width="0.7"/><rect x="4" y="2" width="5" height="2" fill="#3a64a8"/><path d="M4 14 V9 H1 L6 4 L11 9 H8 V14Z" fill="#f1d060" stroke="#b08a20" stroke-width="0.8"/></svg>
<svg style="left:81px;top:116px" width="8" height="5" viewBox="0 0 8 5"><path d="M0 0 H8 L4 4.5Z" fill="#6e6d6a"/></svg>
<svg style="left:101px;top:111px" width="16" height="13" viewBox="0 0 16 13"><path d="M15 6 H8 V2 L2 7 L8 12 V8 H15Z" fill="#f1d060" stroke="#a88a20" stroke-width="0.9"/><path d="M1 0 L3 4 M0 2 H4 M3 0 L1 4" stroke="#223" stroke-width="0.8"/></svg>
<svg style="left:129px;top:111px" width="14" height="12" viewBox="0 0 14 12"><path d="M13.5 4 H7 V1 L0.8 6 L7 11 V8 H13.5Z" fill="#f1d060" stroke="#a88a20" stroke-width="0.9"/></svg>
<svg style="left:153px;top:116px" width="8" height="5" viewBox="0 0 8 5"><path d="M0 0 H8 L4 4.5Z" fill="#6e6d6a"/></svg>
<svg style="left:173px;top:111px" width="14" height="12" viewBox="0 0 14 12"><path d="M0.5 4 H7 V1 L13.2 6 L7 11 V8 H0.5Z" fill="#f6f6f4" stroke="#d0d0cd" stroke-width="0.9"/></svg>
<svg style="left:198px;top:116px" width="8" height="5" viewBox="0 0 8 5"><path d="M0 0 H8 L4 4.5Z" fill="#c8c8c5"/></svg>
<div class="a" style="left:712px;top:106px;width:106px;height:23px;background:#fff;border:1px solid #cdcdc9;border-radius:3px"></div>
<span class="t" style="left:717px;top:111px;font-size:13.5px;color:#b8b8b4;letter-spacing:0px">Quick Access</span>
<svg style="left:824px;top:104px" width="3" height="28" viewBox="0 0 3 28"><rect x="0.5" y="0.5" width="2" height="2.4" rx="0.8" fill="#9c9b97"/><rect x="0.5" y="5.5" width="2" height="2.4" rx="0.8" fill="#9c9b97"/><rect x="0.5" y="10.5" width="2" height="2.4" rx="0.8" fill="#9c9b97"/><rect x="0.5" y="15.5" width="2" height="2.4" rx="0.8" fill="#9c9b97"/><rect x="0.5" y="20.5" width="2" height="2.4" rx="0.8" fill="#9c9b97"/></svg>
<div class="a" style="left:830px;top:102px;width:1px;height:32px;background:#d0d0cc"></div>
<svg style="left:842px;top:111px" width="15" height="15" viewBox="0 0 15 15"><rect x="1" y="3" width="11" height="11" fill="#f0f4f8" stroke="#4a7ab0" stroke-width="0.9"/><path d="M1 7 H12 M5 7 V14" stroke="#4a7ab0" stroke-width="0.9"/><path d="M12 0 L13 2 L15 2.5 L13 3 L12 5 L11 3 L9 2.5 L11 2Z" fill="#f0c040"/></svg>
<div class="a" style="left:870px;top:106px;width:1px;height:24px;background:#d8d8d4"></div>
<div class="a" style="left:877px;top:106px;width:74px;height:26px;background:linear-gradient(#f2f2ef,#e4e4e1);border:1px solid #c8c8c4;border-radius:4px"></div>
<svg style="left:883px;top:111px" width="17" height="16" viewBox="0 0 17 16"><rect x="1" y="3" width="5" height="5" fill="#f8e8a8" stroke="#a89040" stroke-width="0.8"/><rect x="7" y="10" width="5" height="5" fill="#f8e8a8" stroke="#a89040" stroke-width="0.8"/><path d="M3.5 8 V12.5 H7" stroke="#806840" fill="none" stroke-width="0.8"/><ellipse cx="12" cy="5" rx="4" ry="4.5" fill="#8a5a30" stroke="#5a3a18" stroke-width="0.6"/></svg>
<span class="t" style="left:901px;top:112px;font-size:13px;color:#333;letter-spacing:-0.4px">Java EE</span>
<svg style="left:764px;top:5px" width="19" height="13" viewBox="0 0 19 13"><rect x="0" y="0.5" width="12" height="12" rx="1.5" fill="#d9d6ce"/><path d="M12 4 L18.5 1 V12 L12 9Z" fill="#d9d6ce"/><circle cx="6" cy="6.5" r="3.3" fill="#e02424"/></svg>
<svg style="left:797px;top:5px" width="20" height="14" viewBox="0 0 20 14"><path d="M1.5 5 Q10 -2 18.5 5" fill="none" stroke="#dfdbd2" stroke-width="1.6"/><path d="M4.5 8 Q10 3 15.5 8" fill="none" stroke="#dfdbd2" stroke-width="1.6"/><path d="M7.3 10.8 Q10 8.3 12.7 10.8" fill="none" stroke="#dfdbd2" stroke-width="1.6"/><circle cx="10" cy="12.7" r="1.2" fill="#dfdbd2"/></svg>
<div class="a" style="left:830px;top:3px;width:20px;height:17px;background:#dcd9d0;border-radius:1px"></div>
<span class="t" style="left:833px;top:5px;font-size:13.5px;color:#3c3b37;font-weight:normal">Es</span>
<svg style="left:864px;top:5px" width="24" height="13" viewBox="0 0 24 13"><rect x="0.8" y="0.8" width="20" height="11" rx="1.5" fill="none" stroke="#cfcbc2" stroke-width="1.5"/><rect x="21.5" y="4" width="2" height="5" fill="#cfcbc2"/><rect x="3" y="3" width="15.5" height="6.5" fill="#77756f"/><path d="M12.5 3.5 L8 7 H11 L8.5 9.5 L14 6 H11Z" fill="#dfdbd2"/></svg>
<svg style="left:899px;top:4px" width="20" height="16" viewBox="0 0 20 16"><path d="M1 5.5 H4 L8 1.5 V14.5 L4 10.5 H1Z" fill="#dfdbd2"/><path d="M10.5 5 Q12.5 8 10.5 11" fill="none" stroke="#dfdbd2" stroke-width="1.4"/><path d="M13 3 Q16.5 8 13 13" fill="none" stroke="#bdb9b0" stroke-width="1.3"/><path d="M15.5 1 Q20 8 15.5 15" fill="none" stroke="#8d8a83" stroke-width="1.2"/></svg>
<svg style="left:933px;top:3px" width="20" height="18" viewBox="0 0 20 18"><g transform="translate(10,10)" fill="none" stroke="#dfdbd2"><circle r="5.2" stroke-width="2.6"/><rect x="-1.6" y="-8.5" width="3.2" height="3" fill="#dfdbd2" stroke="none" transform="rotate(0)"/><rect x="-1.6" y="-8.5" width="3.2" height="3" fill="#dfdbd2" stroke="none" transform="rotate(45)"/><rect x="-1.6" y="-8.5" width="3.2" height="3" fill="#dfdbd2" stroke="none" transform="rotate(90)"/><rect x="-1.6" y="-8.5" width="3.2" height="3" fill="#dfdbd2" stroke="none" transform="rotate(135)"/><rect x="-1.6" y="-8.5" width="3.2" height="3" fill="#dfdbd2" stroke="none" transform="rotate(180)"/><rect x="-1.6" y="-8.5" width="3.2" height="3" fill="#dfdbd2" stroke="none" transform="rotate(225)"/><rect x="-1.6" y="-8.5" width="3.2" height="3" fill="#dfdbd2" stroke="none" transform="rotate(270)"/><rect x="-1.6" y="-8.5" width="3.2" height="3" fill="#dfdbd2" stroke="none" transform="rotate(315)"/></g><path d="M10 0.5 V9" stroke="#46453f" stroke-width="3.5"/><path d="M10 1 V8.5" stroke="#dfdbd2" stroke-width="1.8"/></svg>
<div class="a" style="left:224px;top:614px;width:696px;height:52px;background:#fdfdf9;border:1px solid #d9d9d5;border-radius:7px 7px 5px 5px"></div>
<div class="a" style="left:399px;top:615px;width:94px;height:30px;background:linear-gradient(#e3e7ec,#eef0f1 60%,#f9f9f6);border-radius:6px 6px 0 0"></div>
<svg style="left:228px;top:622px" width="15" height="15" viewBox="0 0 15 15"><rect x="0.5" y="0.5" width="13" height="13" fill="#f4f6f8" stroke="#b8bcc0" stroke-width="0.8"/><circle cx="4.5" cy="4.5" r="2.5" fill="#e08a8a"/><circle cx="4.5" cy="10" r="2.5" fill="#eecf80"/><path d="M9 1 V13 M9 1 L13 1 V13" fill="#d8e8f4" stroke="#a8c0d8" stroke-width="0.8"/></svg>
<span class="t" style="left:248px;top:624px;font-size:14px;color:#a6a6a2;letter-spacing:0.2px">Markers</span>
<svg style="left:309px;top:622px" width="14" height="14" viewBox="0 0 14 14"><rect x="0.5" y="0.5" width="13" height="13" fill="#eef2f6" stroke="#b4c0cc" stroke-width="0.9"/><path d="M0.5 3.5 H13.5 M0.5 7 H13.5 M0.5 10.5 H13.5 M5 3.5 V13.5" stroke="#c8d2dc" stroke-width="0.8"/></svg>
<span class="t" style="left:327px;top:624px;font-size:14px;color:#a6a6a2;letter-spacing:0.2px">Properties</span>
<svg style="left:405px;top:622px" width="13" height="15" viewBox="0 0 13 15"><path d="M3 3 V13 M9 1 V13" stroke="#707070" stroke-width="1"/><rect x="0.5" y="2" width="5" height="4" fill="#f0c040" stroke="#a08020" stroke-width="0.6"/><rect x="6.5" y="2" width="5" height="4" fill="#f0c040" stroke="#a08020" stroke-width="0.6"/><circle cx="3" cy="10" r="2.3" fill="#50a040"/><circle cx="9.5" cy="10" r="2.3" fill="#4080c0"/></svg>
<span class="t" style="left:421px;top:624px;font-size:14px;color:#111;letter-spacing:-0.1px">Servers</span>
<svg style="left:474.5px;top:624.5px" width="11" height="11" viewBox="0 0 11 11"><path d="M2 2 L8.5 8.5 M8.5 2 L2 8.5" stroke="#3a3a3a" stroke-width="4" stroke-linecap="round"/><path d="M2 2 L8.5 8.5 M8.5 2 L2 8.5" stroke="#fff" stroke-width="2.2" stroke-linecap="round"/></svg>
<svg style="left:496px;top:622px" width="16" height="15" viewBox="0 0 16 15"><path d="M1 2 L5 1 L10 3 L15 1 V13 L10 15 L5 13 L1 14Z" fill="#c8e0a8" stroke="#a8c088" stroke-width="0.7"/><rect x="6" y="6" width="8" height="7" fill="#e8f0e0" stroke="#8ab070" stroke-width="0.7"/></svg>
<span class="t" style="left:515px;top:624px;font-size:14px;color:#a6a6a2;letter-spacing:0.2px">Data Source</span>
<svg style="left:609px;top:622px" width="14" height="15" viewBox="0 0 14 15"><path d="M1 1 H9 L13 5 V14 H1Z" fill="#f4f6f8" stroke="#b8c4d0" stroke-width="0.8"/><path d="M3 4 L6 7 M3 9 H11 M3 11.5 H11" stroke="#8aa8c8" stroke-width="0.9"/></svg>
<span class="t" style="left:627px;top:624px;font-size:14px;color:#a6a6a2;letter-spacing:0.2px">Snippets</span>
<svg style="left:692px;top:622px" width="14" height="14" viewBox="0 0 14 14"><rect x="0.5" y="0.5" width="13" height="10" rx="1" fill="#c8dcf0" stroke="#7aa2c8" stroke-width="0.9"/><path d="M3 4 H9 M3 6.5 H8" stroke="#6a8ab0" stroke-width="0.8"/><path d="M4 13 H10" stroke="#7aa2c8" stroke-width="1.5"/></svg>
<span class="t" style="left:710px;top:624px;font-size:14px;color:#a6a6a2;letter-spacing:0.2px">Console</span>
<svg style="left:769px;top:621px" width="16" height="16" viewBox="0 0 16 16"><path d="M5 3 H14 V15 H5Z" fill="#fff8e0" stroke="#d8c890" stroke-width="0.8"/><circle cx="5.5" cy="5.5" r="4.5" fill="#e87070" stroke="#c04848" stroke-width="0.6"/><path d="M3.5 3.5 L7.5 7.5 M7.5 3.5 L3.5 7.5" stroke="#fff" stroke-width="1.1"/></svg>
<span class="t" style="left:788px;top:624px;font-size:14px;color:#a6a6a2;letter-spacing:0.2px">Error Log</span>
<div class="a" style="left:867px;top:625px;width:11px;height:4px;border:1.2px solid #222;border-radius:1px;background:#fff"></div>
<div class="a" style="left:893px;top:624px;width:11px;height:10px;border:1px solid #333;border-top-width:2px;background:#fff"></div>
<div class="a" style="left:720px;top:650px;width:199px;height:15px;overflow:hidden">
<svg style="left:10px;top:3px" width="14" height="14"><rect x="0.5" y="0.5" width="10" height="10" fill="#e4ecf4" stroke="#9ab4cc"/><rect x="3" y="3" width="10" height="10" fill="#eef3f8" stroke="#6a8eb0"/><path d="M5 8 H11" stroke="#2a5a8a" stroke-width="1.3"/></svg>
<svg style="left:35px;top:3px" width="15" height="14"><ellipse cx="8" cy="8" rx="3.5" ry="4.5" fill="#e8e8e6" stroke="#c0c0bd"/><path d="M1 4 L4.5 6 M15 4 L11.5 6 M0 8 H4 M16 8 H12" stroke="#c8c8c5"/></svg>
<svg style="left:61px;top:3px" width="14" height="14"><circle cx="7" cy="7" r="6.5" fill="#e6e6e4" stroke="#d4d4d1"/><path d="M5 3.5 L10.5 7 L5 10.5Z" fill="#fafaf8"/></svg>
<svg style="left:87px;top:2px" width="16" height="14"><circle cx="6" cy="8" r="5" fill="#f0f0ee" stroke="#cacac7"/><path d="M6 5 V8 L8 9 M10 2 H15 M11 4.5 H15" stroke="#c8c8c5"/></svg>
<svg style="left:115px;top:4px" width="13" height="13"><rect x="0.5" y="0.5" width="11" height="11" fill="#dcdcd9" stroke="#d0d0cd"/></svg>
<svg style="left:140px;top:2px" width="15" height="14"><rect x="0.5" y="2" width="7" height="11" fill="#f4f4f2" stroke="#cfcfcc"/><rect x="7.5" y="0.5" width="7" height="11" fill="#f4f4f2" stroke="#cfcfcc"/></svg>
</div>
<svg style="left:895px;top:656px" width="11" height="7" viewBox="0 0 11 7"><path d="M1 1 H10 L5.5 6Z" fill="#fff" stroke="#333" stroke-width="1.1"/></svg>
<div class="a" style="left:924px;top:141px;width:34px;height:66px;background:linear-gradient(90deg,#e9e9e6,#e3e3e0);border:1px solid #cfcfcb;border-radius:5px"></div>
<svg style="left:931px;top:145px" width="21" height="2" viewBox="0 0 21 2"><rect x="0.0" y="0" width="2.5" height="1.5" fill="#9c9b97"/><rect x="5.5" y="0" width="2.5" height="1.5" fill="#9c9b97"/><rect x="11.0" y="0" width="2.5" height="1.5" fill="#9c9b97"/><rect x="16.5" y="0" width="2.5" height="1.5" fill="#9c9b97"/></svg>
<svg style="left:936px;top:158px" width="10" height="9" viewBox="0 0 10 9"><rect x="3" y="0.5" width="6" height="5" fill="#fff" stroke="#333" stroke-width="1"/><rect x="0.5" y="3" width="6" height="5" fill="#fff" stroke="#333" stroke-width="1"/></svg>
<svg style="left:933px;top:180px" width="17" height="17" viewBox="0 0 17 17"><circle cx="8.5" cy="8.5" r="7.5" fill="#f4f4f0" stroke="#7a7a74" stroke-width="0.8"/><circle cx="8.5" cy="5" r="2.8" fill="#2ea8e0"/><circle cx="5" cy="10.5" r="2.8" fill="#f0d840"/><circle cx="11.5" cy="11" r="2.8" fill="#30b040"/></svg>
<div class="a" style="left:924px;top:210px;width:34px;height:92px;background:linear-gradient(90deg,#e9e9e6,#e3e3e0);border:1px solid #cfcfcb;border-radius:5px"></div>
<svg style="left:931px;top:214px" width="21" height="2" viewBox="0 0 21 2"><rect x="0.0" y="0" width="2.5" height="1.5" fill="#9c9b97"/><rect x="5.5" y="0" width="2.5" height="1.5" fill="#9c9b97"/><rect x="11.0" y="0" width="2.5" height="1.5" fill="#9c9b97"/><rect x="16.5" y="0" width="2.5" height="1.5" fill="#9c9b97"/></svg>
<svg style="left:936px;top:227px" width="10" height="9" viewBox="0 0 10 9"><rect x="3" y="0.5" width="6" height="5" fill="#fff" stroke="#333" stroke-width="1"/><rect x="0.5" y="3" width="6" height="5" fill="#fff" stroke="#333" stroke-width="1"/></svg>
<svg style="left:934px;top:251px" width="15" height="15" viewBox="0 0 15 15"><rect x="0.5" y="0.5" width="5" height="5" fill="#d0e8f8" stroke="#2a88d0" stroke-width="1"/><rect x="0.5" y="9" width="5" height="5" fill="#d0e8f8" stroke="#2a88d0" stroke-width="1"/><rect x="7" y="5.5" width="3" height="3" fill="#d0e8f8" stroke="#2a88d0" stroke-width="0.8"/><path d="M6 3 H14 M11 7 H14 M6 11.5 H14" stroke="#6aa0c8" stroke-width="1"/></svg>
<svg style="left:935px;top:277px" width="13" height="16" viewBox="0 0 13 16"><path d="M1 1 H12 V14 L9 15.5 L6.5 14 L4 15.5 L1 14Z" fill="#e8eaee" stroke="#6a7484" stroke-width="0.9"/><path d="M3 4 H10 M3 6.5 H10 M3 9 H10 M3 11.5 H10" stroke="#7a8494" stroke-width="0.8"/></svg>
<div class="a" style="left:0px;top:666px;width:960px;height:31px;background:#e6e6e3"></div>
<svg style="left:5px;top:673px" width="13" height="15" viewBox="0 0 13 15"><path d="M0.5 0.5 H8 L12 4.5 V14 H0.5Z" fill="#f4f6f8" stroke="#8a9098" stroke-width="0.8"/><path d="M2.5 5 H9.5 M2.5 7.5 H9.5 M2.5 10 H9.5" stroke="#7a9ac0" stroke-width="1.2"/></svg>
<span class="t" style="left:22.5px;top:674px;font-size:14px;color:#3a3a3a;letter-spacing:0.75px">html/head/script/#text</span>
<div class="a" style="left:341px;top:670px;width:1px;height:24px;background:#d2d2ce"></div>
<div class="a" style="left:452px;top:670px;width:1px;height:24px;background:#d2d2ce"></div>
<div class="a" style="left:557px;top:670px;width:1px;height:24px;background:#d2d2ce"></div>
<span class="t" style="left:347px;top:674px;font-size:14px;color:#3c3c3c;letter-spacing:0.3px">Writable</span>
<span class="t" style="left:458px;top:674px;font-size:14px;color:#3c3c3c;letter-spacing:0.3px">Smart Insert</span>
<span class="t" style="left:564px;top:674px;font-size:14px;color:#3c3c3c;letter-spacing:-0.4px">16 : 67</span>
<svg style="left:660px;top:672px" width="3" height="24" viewBox="0 0 3 24"><rect x="0.5" y="0.5" width="2" height="2.4" rx="0.8" fill="#9c9b97"/><rect x="0.5" y="5.5" width="2" height="2.4" rx="0.8" fill="#9c9b97"/><rect x="0.5" y="10.5" width="2" height="2.4" rx="0.8" fill="#9c9b97"/><rect x="0.5" y="15.5" width="2" height="2.4" rx="0.8" fill="#9c9b97"/></svg>
<div class="a" style="left:0px;top:697px;width:960px;height:23px;background:linear-gradient(#4a4943,#383732)"></div>
<div class="a" style="left:27px;top:697px;width:1px;height:23px;background:#2a2926"></div>
<svg style="left:6px;top:703px" width="15" height="14" viewBox="0 0 15 14"><rect x="0.5" y="0.5" width="14" height="2.5" fill="#f0e0f0"/><rect x="0.5" y="4" width="14" height="9.5" rx="1" fill="#a030b0"/><rect x="2.5" y="6" width="2" height="2" fill="#f0d0f0"/><rect x="2.5" y="9.5" width="2" height="2" fill="#f0d0f0"/></svg>
<div class="a" style="left:228px;top:697px;width:1px;height:23px;background:#2e2d2a"></div>
<div class="a" style="left:420px;top:697px;width:1px;height:23px;background:#2e2d2a"></div>
<svg style="left:48px;top:701px" width="15" height="15" viewBox="0 0 15 15"><circle cx="7.5" cy="7.5" r="7" fill="#db4437"/><path d="M7.5 7.5 L1.4 4 A7 7 0 0 0 4 13.6Z" fill="#0f9d58"/><path d="M7.5 7.5 L4 13.6 A7 7 0 0 0 14.5 7.5Z" fill="#f4b400"/><path d="M7.5 7.5 L14.5 7.5 A7 7 0 0 0 1.4 4Z" fill="#db4437"/><circle cx="7.5" cy="7.5" r="3.3" fill="#fff"/><circle cx="7.5" cy="7.5" r="2.5" fill="#4285f4"/></svg>
<span class="t" style="left:70px;top:701px;font-size:14px;color:#dfdbd2;letter-spacing:0.2px">Insert title here - Goo…</span>
<svg style="left:240px;top:702px" width="15" height="14" viewBox="0 0 15 14"><rect x="0.5" y="0.5" width="14" height="13" rx="1" fill="#8a8882"/><rect x="2" y="2" width="11" height="3" fill="#d0cdc4"/><rect x="2" y="6" width="11" height="6" fill="#b8b5ac"/><rect x="5" y="7.5" width="5" height="1.5" fill="#f0f0e8"/></svg>
<span class="t" style="left:263px;top:701px;font-size:14px;color:#dfdbd2;letter-spacing:0.2px">[04-JavaScript]</span>
<svg style="left:432px;top:702px" width="15" height="14" viewBox="0 0 15 14"><rect x="0.5" y="0.5" width="14" height="13" rx="1" fill="#8a8882"/><rect x="2" y="2" width="11" height="3" fill="#d0cdc4"/><rect x="2" y="6" width="11" height="6" fill="#b8b5ac"/><rect x="5" y="7.5" width="5" height="1.5" fill="#f0f0e8"/></svg>
<span class="t" style="left:454px;top:701px;font-size:14px;color:#dfdbd2;letter-spacing:0.2px">lib</span>
<div class="a" style="left:614px;top:697px;width:193px;height:23px;background:linear-gradient(#383731,#2e2d29)"></div>
<svg style="left:625px;top:701px" width="16" height="15" viewBox="0 0 16 15"><rect x="0.5" y="0.5" width="15" height="14" fill="#4a3c80"/><g transform="translate(8,7.5)"><circle r="5.6" fill="#f4f4f8"/><rect x="-1.3" y="-7.3" width="2.6" height="2.6" fill="#f4f4f8" transform="rotate(0)"/><rect x="-1.3" y="-7.3" width="2.6" height="2.6" fill="#f4f4f8" transform="rotate(30)"/><rect x="-1.3" y="-7.3" width="2.6" height="2.6" fill="#f4f4f8" transform="rotate(60)"/><rect x="-1.3" y="-7.3" width="2.6" height="2.6" fill="#f4f4f8" transform="rotate(90)"/><rect x="-1.3" y="-7.3" width="2.6" height="2.6" fill="#f4f4f8" transform="rotate(120)"/><rect x="-1.3" y="-7.3" width="2.6" height="2.6" fill="#f4f4f8" transform="rotate(150)"/><rect x="-1.3" y="-7.3" width="2.6" height="2.6" fill="#f4f4f8" transform="rotate(180)"/><rect x="-1.3" y="-7.3" width="2.6" height="2.6" fill="#f4f4f8" transform="rotate(210)"/><rect x="-1.3" y="-7.3" width="2.6" height="2.6" fill="#f4f4f8" transform="rotate(240)"/><rect x="-1.3" y="-7.3" width="2.6" height="2.6" fill="#f4f4f8" transform="rotate(270)"/><rect x="-1.3" y="-7.3" width="2.6" height="2.6" fill="#f4f4f8" transform="rotate(300)"/><rect x="-1.3" y="-7.3" width="2.6" height="2.6" fill="#f4f4f8" transform="rotate(330)"/><circle r="4" fill="#15122a"/><circle r="3" fill="#6a5a9a"/></g></svg>
<span class="t" style="left:648px;top:701px;font-size:14px;color:#dfdbd2;letter-spacing:-0.3px">Java EE - JavaScript/…</span>
<div class="a" style="left:807px;top:697px;width:40px;height:23px;background:linear-gradient(#4a4943,#383732)"></div>
<div class="a" style="left:847px;top:699px;width:28px;height:21px;background:#e8917a;border:1px solid #f4d8cc"></div>
<svg style="left:853px;top:702px" width="16" height="15" viewBox="0 0 16 15"><rect x="0.5" y="0.5" width="15" height="14" fill="#4a3c80"/><g transform="translate(8,7.5)"><circle r="5.6" fill="#f4f4f8"/><rect x="-1.3" y="-7.3" width="2.6" height="2.6" fill="#f4f4f8" transform="rotate(0)"/><rect x="-1.3" y="-7.3" width="2.6" height="2.6" fill="#f4f4f8" transform="rotate(30)"/><rect x="-1.3" y="-7.3" width="2.6" height="2.6" fill="#f4f4f8" transform="rotate(60)"/><rect x="-1.3" y="-7.3" width="2.6" height="2.6" fill="#f4f4f8" transform="rotate(90)"/><rect x="-1.3" y="-7.3" width="2.6" height="2.6" fill="#f4f4f8" transform="rotate(120)"/><rect x="-1.3" y="-7.3" width="2.6" height="2.6" fill="#f4f4f8" transform="rotate(150)"/><rect x="-1.3" y="-7.3" width="2.6" height="2.6" fill="#f4f4f8" transform="rotate(180)"/><rect x="-1.3" y="-7.3" width="2.6" height="2.6" fill="#f4f4f8" transform="rotate(210)"/><rect x="-1.3" y="-7.3" width="2.6" height="2.6" fill="#f4f4f8" transform="rotate(240)"/><rect x="-1.3" y="-7.3" width="2.6" height="2.6" fill="#f4f4f8" transform="rotate(270)"/><rect x="-1.3" y="-7.3" width="2.6" height="2.6" fill="#f4f4f8" transform="rotate(300)"/><rect x="-1.3" y="-7.3" width="2.6" height="2.6" fill="#f4f4f8" transform="rotate(330)"/><circle r="4" fill="#15122a"/><circle r="3" fill="#6a5a9a"/></g></svg>
<div class="a" style="left:875px;top:697px;width:85px;height:23px;background:#2f2e2b"></div>
<div class="a" style="left:875px;top:697px;width:1px;height:23px;background:#252420"></div>
<div class="a" style="left:915px;top:697px;width:1px;height:23px;background:#252420"></div>
<div class="a" style="left:932px;top:697px;width:1px;height:23px;background:#252420"></div>
<svg style="left:231px;top:149px" width="12" height="14" viewBox="0 0 12 14"><path d="M0.5 0.5 H7.5 L11 4 V13.5 H0.5Z" fill="#f6f6ee" stroke="#9c9a88" stroke-width="0.9"/><path d="M2.5 4 H5.5 M2.5 6 H6" stroke="#d88080" stroke-width="0.9"/><rect x="4" y="7" width="5.5" height="4.5" fill="#9fc8e0"/><path d="M5 9 H9" stroke="#5a9a80" stroke-width="0.8"/></svg>
<svg style="left:321px;top:150px" width="11" height="11" viewBox="0 0 11 11"><path d="M2 2 L8.5 8.5 M8.5 2 L2 8.5" stroke="#3a3a3a" stroke-width="4" stroke-linecap="round"/><path d="M2 2 L8.5 8.5 M8.5 2 L2 8.5" stroke="#fff" stroke-width="2.2" stroke-linecap="round"/></svg>
<div class="a" style="left:6px;top:651px;width:211px;height:13px;background:linear-gradient(#e4e4e1,#dcdcd9);border:1px solid #c9c9c6;border-radius:7px"></div>
<div class="a" style="left:6px;top:651px;width:24px;height:13px;background:#f7f7f4;border:1px solid #c9c9c6;border-radius:7px 0 0 7px;border-right:none"></div>
<div class="a" style="left:193px;top:651px;width:24px;height:13px;background:#f7f7f4;border:1px solid #c9c9c6;border-radius:0 7px 7px 0;border-left:none"></div>
<div class="a" style="left:18px;top:651px;width:139px;height:13px;background:linear-gradient(#fbfbf8,#f1f1ee 55%,#e4e4e1);border:1px solid #bdbdba;border-radius:7px"></div>
<div class="a" style="left:156px;top:652px;width:50px;height:11px;background:#dfdfdc;border-radius:0 6px 6px 0"></div>
<svg style="left:11px;top:654px" width="5" height="7" viewBox="0 0 5 7"><path d="M4.5 0.5 L0.5 3.5 L4.5 6.5Z" fill="#a0a09d"/></svg>
<svg style="left:210px;top:654px" width="5" height="7" viewBox="0 0 5 7"><path d="M0.5 0.5 L4.5 3.5 L0.5 6.5Z" fill="#444"/></svg>
<svg style="left:84px;top:655px" width="7" height="4" viewBox="0 0 7 4"><path d="M1 0 V4 M3 0 V4 M5 0 V4" stroke="#b0b0ad" stroke-width="0.8"/></svg>
</div></body></html>
